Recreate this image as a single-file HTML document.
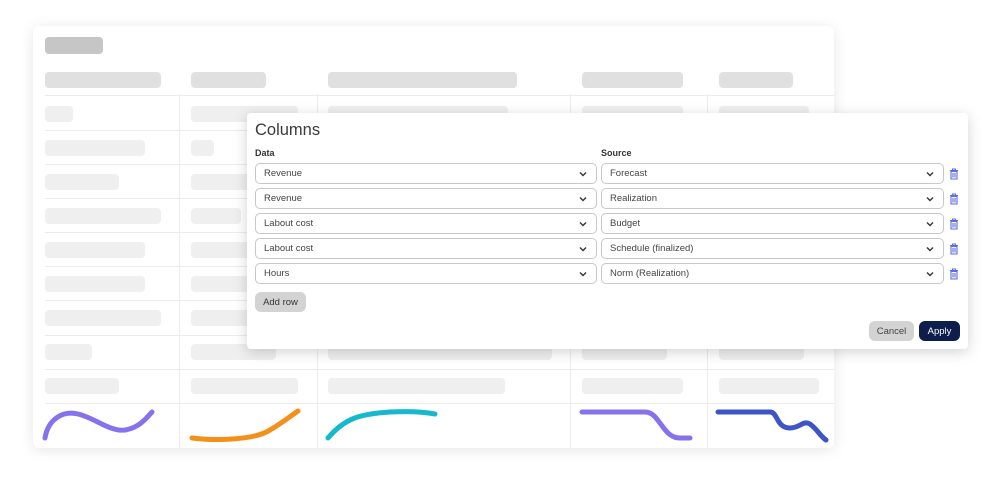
<!DOCTYPE html>
<html><head><style>
body{margin:0;width:1000px;height:486px;background:#fff;position:relative;overflow:hidden;font-family:"Liberation Sans",sans-serif}
.card{position:absolute;left:33px;top:26px;width:801px;height:422px;background:#fff;border-radius:6px;box-shadow:0 2px 14px rgba(0,0,0,.10)}
.b{position:absolute;height:16px;border-radius:4px;background:#efefef}
.h{background:#e0e0e0}
.vl{position:absolute;top:68px;bottom:0;width:1px;background:#ececec}
.hl{position:absolute;left:12px;right:0;height:1px;background:#ececec}
.modal{position:absolute;left:247px;top:113px;width:721px;height:236px;background:#fff;border-radius:4px;box-shadow:0 3px 14px rgba(0,0,0,.18)}
.sel{position:absolute;height:19px;border:1px solid #c8c8c8;border-radius:5px;font-size:9.5px;color:#444;line-height:20px;padding-left:8px;box-sizing:content-box}
.sel svg{position:absolute;right:9px;top:7px}
.lbl{position:absolute;font-size:9px;font-weight:bold;color:#333}
.trash{position:absolute;left:702px}
.btn{position:absolute;height:20px;border-radius:6px;font-size:9.5px;display:flex;align-items:center;justify-content:center}
</style></head><body>
<div class="card">
 <div class="b" style="left:12px;top:11px;width:58px;height:17px;background:#c6c6c6"></div>
 <div class="vl" style="left:146px"></div><div class="vl" style="left:284px"></div><div class="vl" style="left:537px"></div><div class="vl" style="left:674px"></div>
 <div class="hl" style="top:69px"></div><div class="hl" style="top:104px"></div><div class="hl" style="top:138px"></div><div class="hl" style="top:172px"></div><div class="hl" style="top:206px"></div><div class="hl" style="top:240px"></div><div class="hl" style="top:274px"></div><div class="hl" style="top:309px"></div><div class="hl" style="top:343px"></div><div class="hl" style="top:377px"></div>
 <div class="b h" style="left:12px;top:46px;width:116px"></div><div class="b h" style="left:158px;top:46px;width:75px"></div><div class="b h" style="left:295px;top:46px;width:189px"></div><div class="b h" style="left:549px;top:46px;width:101px"></div><div class="b h" style="left:686px;top:46px;width:74px"></div>
 <div class="b" style="left:12px;top:80px;width:28px"></div><div class="b" style="left:158px;top:80px;width:107px"></div><div class="b" style="left:295px;top:80px;width:180px"></div><div class="b" style="left:549px;top:80px;width:101px"></div><div class="b" style="left:686px;top:80px;width:90px"></div>
 <div class="b" style="left:12px;top:114px;width:100px"></div><div class="b" style="left:158px;top:114px;width:23px"></div>
 <div class="b" style="left:12px;top:148px;width:74px"></div><div class="b" style="left:158px;top:148px;width:80px"></div>
 <div class="b" style="left:12px;top:182px;width:116px"></div><div class="b" style="left:158px;top:182px;width:50px"></div>
 <div class="b" style="left:12px;top:216px;width:100px"></div><div class="b" style="left:158px;top:216px;width:80px"></div>
 <div class="b" style="left:12px;top:250px;width:100px"></div><div class="b" style="left:158px;top:250px;width:80px"></div>
 <div class="b" style="left:12px;top:284px;width:116px"></div><div class="b" style="left:158px;top:284px;width:80px"></div>
 <div class="b" style="left:12px;top:318px;width:47px"></div><div class="b" style="left:158px;top:318px;width:85px"></div><div class="b" style="left:295px;top:318px;width:224px"></div><div class="b" style="left:549px;top:318px;width:85px"></div><div class="b" style="left:686px;top:318px;width:85px"></div>
 <div class="b" style="left:12px;top:352px;width:74px"></div><div class="b" style="left:158px;top:352px;width:107px"></div><div class="b" style="left:295px;top:352px;width:177px"></div><div class="b" style="left:549px;top:352px;width:101px"></div><div class="b" style="left:686px;top:352px;width:100px"></div>
</div>
<svg style="position:absolute;left:0;top:0" width="1000" height="486" fill="none" stroke-width="5" stroke-linecap="round">
 <path d="M45,438 C48,420 62,410 78,414 C95,418 110,432 125,430 C138,428 145,420 152,412" stroke="#8573ee"/>
 <path d="M192,438 C215,441 255,440 270,430 C282,423 292,415 298,411" stroke="#f4901a"/>
 <path d="M328,438 C345,418 360,414 390,412 C410,411 425,412 435,414" stroke="#16b9cc"/>
 <path d="M582,412 L645,412 C660,412 662,438 680,438 L690,438" stroke="#8573ee"/>
 <path d="M718,412 L770,412 C778,412 776,428 790,428 C800,428 803,420 810,424 C818,430 820,436 826,440" stroke="#3d55c4"/>
</svg>
<div class="modal">
 <div style="position:absolute;left:8px;top:8px;font-size:16.5px;color:#3a3a3a">Columns</div>
 <div class="lbl" style="left:8px;top:35px">Data</div>
 <div class="lbl" style="left:354px;top:35px">Source</div>
 <div id="rows"></div>
 <div class="btn" style="left:8px;top:179px;width:51px;background:#d3d3d3;color:#333">Add row</div>
 <div class="btn" style="left:622px;top:208px;width:45px;background:#d3d3d3;color:#444">Cancel</div>
 <div class="btn" style="left:672px;top:208px;width:41px;background:#0d1e4c;color:#fff">Apply</div>
</div>
<script>
var d=[["Revenue","Forecast"],["Revenue","Realization"],["Labout cost","Budget"],["Labout cost","Schedule (finalized)"],["Hours","Norm (Realization)"]];
var chev='<svg width="8" height="6" viewBox="0 0 8 6"><path d="M1,1.5 L4,4.5 L7,1.5" stroke="#333" stroke-width="1.4" fill="none"/></svg>';
var tr='<svg width="10" height="12" viewBox="0 0 10 12"><path d="M1,2.5H9M3.5,2.5V1H6.5V2.5M2,3.5H8V11H2Z M4,5V9.5M6,5V9.5" stroke="#5b6ce0" stroke-width="1.1" fill="none"/></svg>';
var h='';
d.forEach(function(r,i){var t=50+i*25;
h+='<div class="sel" style="left:8px;top:'+t+'px;width:332px">'+r[0]+chev+'</div>';
h+='<div class="sel" style="left:354px;top:'+t+'px;width:333px">'+r[1]+chev+'</div>';
h+='<div class="trash" style="top:'+(t+4)+'px">'+tr+'</div>';});
document.getElementById('rows').innerHTML=h;
</script>
</body></html>
